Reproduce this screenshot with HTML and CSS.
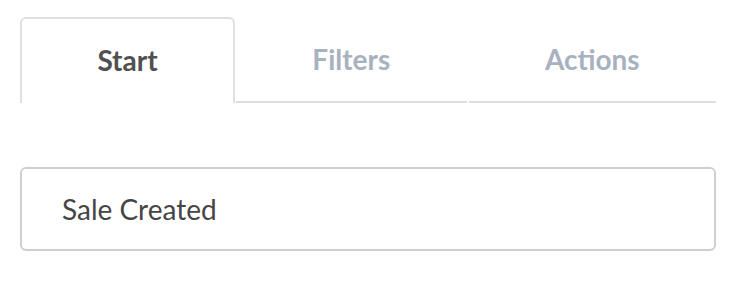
FILE: index.html
```html
<!DOCTYPE html>
<html>
<head>
<meta charset="utf-8">
<link rel="stylesheet" href="styles.css">
</head>
<body>
<div class="panel">
  <div class="tabs">
    <div class="tab active">Start</div>
    <div class="tab">Filters</div>
    <div class="tab last">Actions</div>
  </div>
  <div class="field">Sale Created</div>
</div>
</body>
</html>
```
FILE: styles.css
```css
html, body {
  margin: 0;
  padding: 0;
  background: #fff;
}
.panel {
  width: 696px;
  padding: 17px 0 0 20px;
  font-family: Lato, "Source Sans Pro", "Liberation Sans", sans-serif;
}
.tabs {
  display: flex;
  height: 86px;
}
.tab {
  flex: 1 1 auto;
  display: flex;
  align-items: center;
  justify-content: center;
  font-size: 28px;
  font-weight: 700;
  color: #a8b2bf;
  border-bottom: 2px solid #dedede;
  box-sizing: border-box;
}
.tab + .tab {
  margin-left: 1px;
}
.tab.last {
  margin-left: 2px;
}
.tab.active {
  flex: 0 0 215px;
  color: #505050;
  border: 2px solid #e0e0e0;
  border-bottom: none;
  border-radius: 6px 6px 0 0;
  padding-bottom: 2px;
}
.field {
  margin-top: 64px;
  height: 84px;
  box-sizing: border-box;
  border: 2px solid #cfcfcf;
  border-radius: 6px;
  padding-left: 40px;
  display: flex;
  align-items: center;
  font-size: 28px;
  color: #454545;
}
```
